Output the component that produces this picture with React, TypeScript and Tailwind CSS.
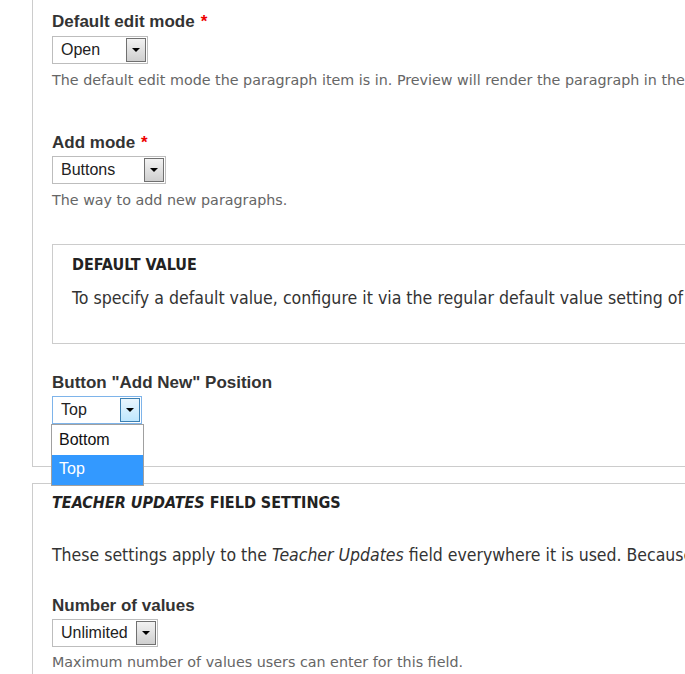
import React from 'react';

const labelCls = 'block text-[17px] leading-[20px] font-bold text-[#333] font-["Liberation_Sans",Arial,sans-serif]';
const descCls = 'text-[14.3px] leading-[20px] text-[#666] whitespace-nowrap font-["DejaVu_Sans",Verdana,sans-serif]';
const condCls = "whitespace-nowrap font-['DejaVu_Sans_Condensed','DejaVu_Sans',sans-serif]";

const Arrow = ({ active }: { active?: boolean }) => (
  <div
    className={`w-[20px] h-full flex items-center justify-center border ${
      active
        ? 'border-[#3c7fb1] bg-gradient-to-b from-[#eaf6fd] to-[#bee6fd]'
        : 'border-[#707070] bg-gradient-to-b from-[#f2f2f2] to-[#cfcfcf]'
    }`}
  >
    <svg width="8" height="4" viewBox="0 0 8 4">
      <path d="M0 0 L8 0 L4 4 Z" fill="#000" />
    </svg>
  </div>
);

const Select = ({ value, width, active }: { value: string; width: string; active?: boolean }) => (
  <div
    className={`${width} h-[28px] flex items-stretch border bg-white p-px ${
      active ? 'border-[#7eb4ea]' : 'border-[#bdbdbd]'
    }`}
  >
    <span className="flex-1 pl-[7px] text-[16px] leading-[24px] text-[#222] font-['Liberation_Sans',Arial,sans-serif]">
      {value}
    </span>
    <Arrow active={active} />
  </div>
);

const Req = () => <span className="text-[#e00] font-bold ml-[6px]">*</span>;

export default function App() {
  return (
    <div className="w-[685px] h-[674px] overflow-hidden bg-white">
      <div className="ml-[32px] w-[700px] border-l border-b border-[#ccc] pl-[19px] pt-[12px] pb-[42px]">
        <label className={labelCls}>
          Default edit mode<Req />
        </label>
        <div className="mt-[4px]">
          <Select value="Open" width="w-[96px]" />
        </div>
        <div className={`${descCls} mt-[6px]`}>
          The default edit mode the paragraph item is in. Preview will render the paragraph in the preview mode.
        </div>

        <label className={`${labelCls} mt-[43px]`}>
          Add mode<Req />
        </label>
        <div className="mt-[3px]">
          <Select value="Buttons" width="w-[114px]" />
        </div>
        <div className={`${descCls} mt-[6px]`}>The way to add new paragraphs.</div>

        <div className={`mt-[34px] h-[100px] border border-[#ccc] pl-[19px] pt-[10px] ${condCls}`}>
          <div className="text-[16px] leading-[20px] font-bold text-[#222]">DEFAULT VALUE</div>
          <div className="mt-[13px] text-[17.6px] leading-[20px] text-[#333]">
            To specify a default value, configure it via the regular default value setting of each field.
          </div>
        </div>

        <label className={`${labelCls} mt-[29px]`}>Button "Add New" Position</label>
        <div className="mt-[3px] relative">
          <Select value="Top" width="w-[90px]" active />
          <div className="absolute left-[-1px] top-[28px] w-[93px] border border-[#a0a0a0] bg-white font-['Liberation_Sans',Arial,sans-serif] text-[16px] z-10">
            <div className="h-[30px] leading-[30px] pl-[7px] text-[#111]">Bottom</div>
            <div className="h-[30px] leading-[28px] pl-[7px] text-white bg-[#3399ff]">Top</div>
          </div>
        </div>
      </div>

      <div className="mt-[16px] ml-[32px] w-[700px] border-l border-t border-[#ccc] pl-[19px] pt-[9px] pb-[20px]">
        <div className={`text-[16px] leading-[20px] font-bold text-[#222] ${condCls}`}>
          <em>TEACHER UPDATES</em> FIELD SETTINGS
        </div>
        <div className={`mt-[32px] text-[17.5px] leading-[20px] text-[#333] ${condCls}`}>
          These settings apply to the <em>Teacher Updates</em> field everywhere it is used. Because these settings are shared.
        </div>
        <label className={`${labelCls} mt-[31px]`}>Number of values</label>
        <div className="mt-[3px]">
          <Select value="Unlimited" width="w-[106px]" />
        </div>
        <div className={`${descCls} mt-[5px]`}>Maximum number of values users can enter for this field.</div>
      </div>
    </div>
  );
}
